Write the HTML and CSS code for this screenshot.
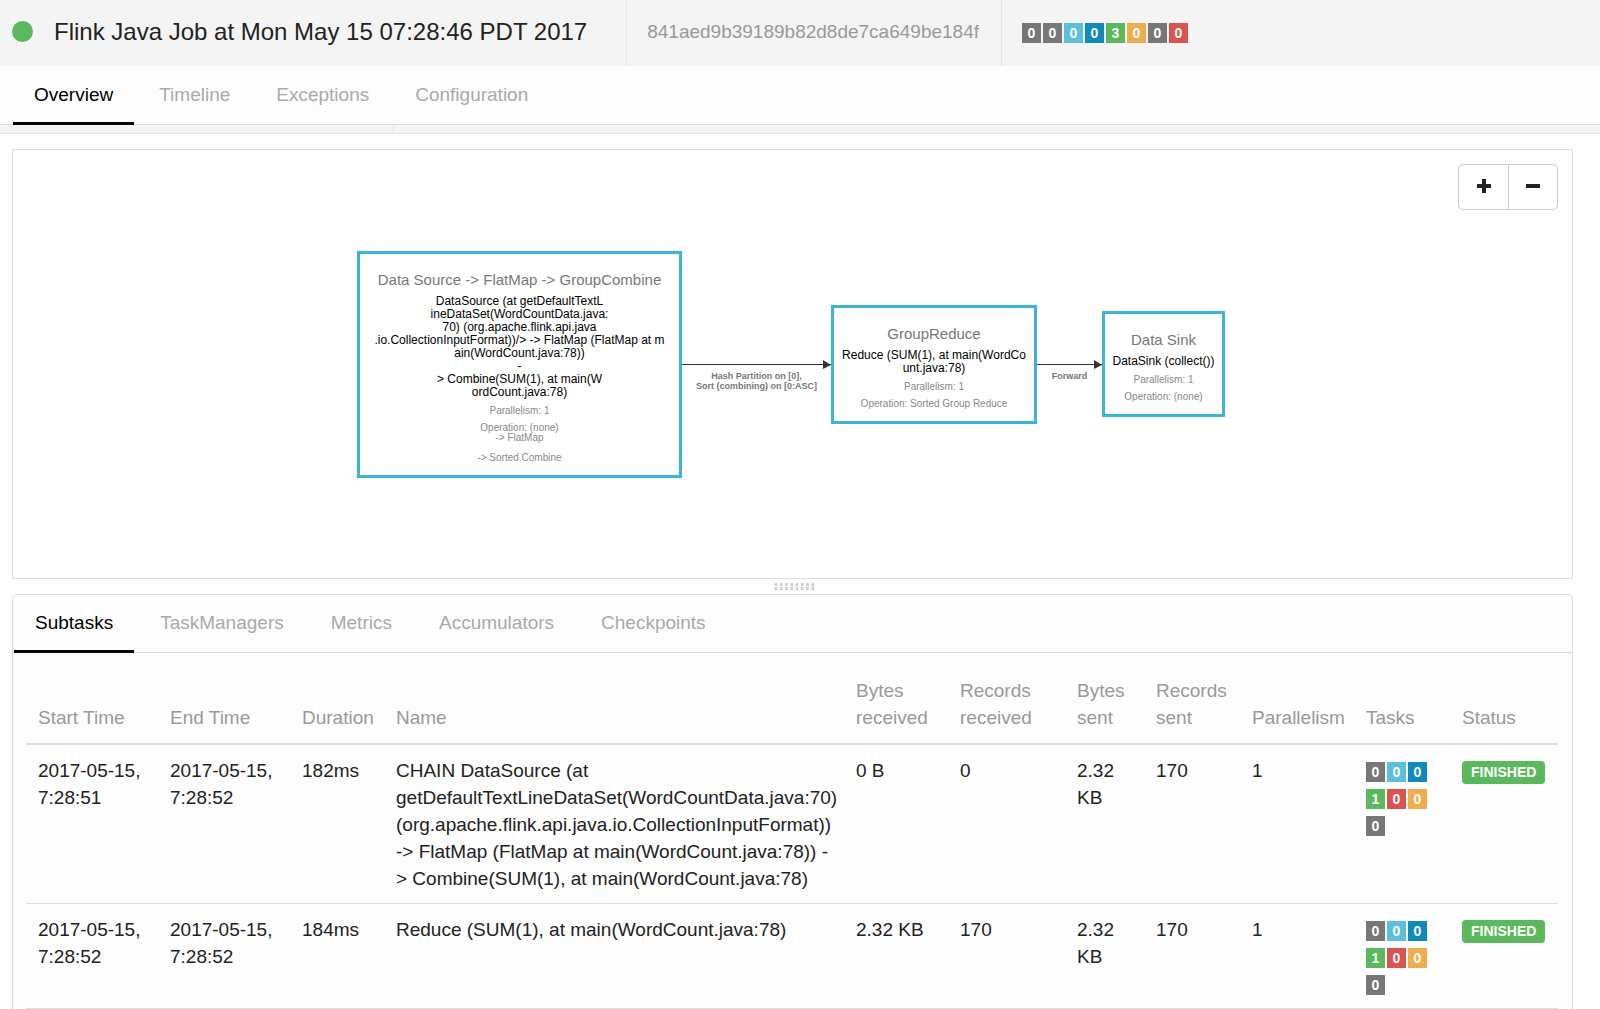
FILE: index.html
```html
<!DOCTYPE html>
<html lang="en">
<head>
    <meta charset="UTF-8">
    <meta name="viewport" content="width=device-width, initial-scale=1.0">
    <title>Apache Flink Web Dashboard</title>
    <link rel="stylesheet" href="styles.css">
</head>
<body>
    <header class="job-header">
        <div class="job-name"><span class="status-dot"></span><h1>Flink Java Job at Mon May 15 07:28:46 PDT 2017</h1></div>
        <div class="job-id">841aed9b39189b82d8de7ca649be184f</div>
        <div class="job-counts">
            <span class="count gray">0</span><span class="count gray">0</span><span class="count sky">0</span><span class="count blue">0</span><span class="count green">3</span><span class="count orange">0</span><span class="count gray">0</span><span class="count red">0</span>
        </div>
    </header>
    <nav class="tabs main-tabs">
        <a href="#overview" class="active">Overview</a>
        <a href="#timeline">Timeline</a>
        <a href="#exceptions">Exceptions</a>
        <a href="#configuration">Configuration</a>
    </nav>
    <div class="header-strip"><span></span></div>

    <main>
        <section class="plan">
            <div class="zoom-buttons">
                <button type="button" aria-label="Zoom in"><svg width="16" height="16" viewBox="0 0 16 16"><path d="M6 1h4v5h5v4h-5v5H6v-5H1V6h5z"/></svg></button>
                <button type="button" aria-label="Zoom out"><svg width="16" height="16" viewBox="0 0 16 16"><path d="M1 6h14v4H1z"/></svg></button>
            </div>
            <div class="graph">
                <div class="node source">
                    <h4>Data Source -&gt; FlatMap -&gt; GroupCombine</h4>
                    <p class="node-name">DataSource (at getDefaultTextL<br>ineDataSet(WordCountData.java:<br>70) (org.apache.flink.api.java<br>.io.CollectionInputFormat))/&gt; -&gt; FlatMap (FlatMap at m<br>ain(WordCount.java:78))<br>-<br>&gt; Combine(SUM(1), at main(W<br>ordCount.java:78)</p>
                    <p class="node-info">Parallelism: 1</p>
                    <p class="node-info">Operation: (none)<br>-&gt; FlatMap<br><br>-&gt; Sorted Combine</p>
                </div>
                <div class="edge edge-long">
                    <div class="arrow"></div>
                    <p>Hash Partition on [0],<br>Sort (combining) on [0:ASC]</p>
                </div>
                <div class="node reduce">
                    <h4>GroupReduce</h4>
                    <p class="node-name">Reduce (SUM(1), at main(WordCo<br>unt.java:78)</p>
                    <p class="node-info">Parallelism: 1</p>
                    <p class="node-info">Operation: Sorted Group Reduce</p>
                </div>
                <div class="edge edge-short">
                    <div class="arrow"></div>
                    <p>Forward</p>
                </div>
                <div class="node sink">
                    <h4>Data Sink</h4>
                    <p class="node-name">DataSink (collect())</p>
                    <p class="node-info">Parallelism: 1</p>
                    <p class="node-info">Operation: (none)</p>
                </div>
            </div>
        </section>

        <div class="splitter"><span></span></div>

        <section class="details">
            <nav class="tabs">
                <a href="#subtasks" class="active">Subtasks</a>
                <a href="#taskmanagers">TaskManagers</a>
                <a href="#metrics">Metrics</a>
                <a href="#accumulators">Accumulators</a>
                <a href="#checkpoints">Checkpoints</a>
            </nav>
            <table>
                <colgroup>
                    <col class="col-time"><col class="col-time"><col class="col-duration"><col>
                    <col class="col-bytes-in"><col class="col-records-in"><col class="col-bytes-out"><col class="col-records-out">
                    <col class="col-parallelism"><col class="col-tasks"><col class="col-status">
                </colgroup>
                <thead>
                    <tr>
                        <th>Start Time</th>
                        <th>End Time</th>
                        <th>Duration</th>
                        <th>Name</th>
                        <th>Bytes received</th>
                        <th>Records received</th>
                        <th>Bytes sent</th>
                        <th>Records sent</th>
                        <th>Parallelism</th>
                        <th>Tasks</th>
                        <th>Status</th>
                    </tr>
                </thead>
                <tbody>
                    <tr>
                        <td>2017-05-15, 7:28:51</td>
                        <td>2017-05-15, 7:28:52</td>
                        <td>182ms</td>
                        <td>CHAIN DataSource (at<br>getDefaultTextLineDataSet(WordCountData.java:70)<br>(org.apache.flink.api.java.io.CollectionInputFormat))<br>-&gt; FlatMap (FlatMap at main(WordCount.java:78)) -<br>&gt; Combine(SUM(1), at main(WordCount.java:78)</td>
                        <td>0 B</td>
                        <td>0</td>
                        <td>2.32 KB</td>
                        <td>170</td>
                        <td>1</td>
                        <td><div class="task-counts"><span class="count gray">0</span><span class="count sky">0</span><span class="count blue">0</span><span class="count green">1</span><span class="count red">0</span><span class="count orange">0</span><span class="count gray">0</span></div></td>
                        <td><span class="label">FINISHED</span></td>
                    </tr>
                    <tr>
                        <td>2017-05-15, 7:28:52</td>
                        <td>2017-05-15, 7:28:52</td>
                        <td>184ms</td>
                        <td>Reduce (SUM(1), at main(WordCount.java:78)</td>
                        <td>2.32 KB</td>
                        <td>170</td>
                        <td>2.32 KB</td>
                        <td>170</td>
                        <td>1</td>
                        <td><div class="task-counts"><span class="count gray">0</span><span class="count sky">0</span><span class="count blue">0</span><span class="count green">1</span><span class="count red">0</span><span class="count orange">0</span><span class="count gray">0</span></div></td>
                        <td><span class="label">FINISHED</span></td>
                    </tr>
                </tbody>
            </table>
        </section>
    </main>
</body>
</html>
```
FILE: styles.css
```css
* { box-sizing: border-box; }
body { margin: 0; background: #fff; color: #222; font-family: "Liberation Sans", Arial, sans-serif; font-size: 19px; line-height: 27px; }
h1, h4, p { margin: 0; font-weight: normal; }

.job-header { display: flex; height: 66px; background: #f4f4f4; }
.job-header > div { display: flex; align-items: center; padding: 0 22px 4px 20px; border-right: 1px solid #e4e4e4; }
.job-header > .job-name { gap: 21px; padding-left: 12px; padding-right: 39px; }
.job-header > .job-counts { border-right: 0; gap: 2px; padding-bottom: 0; }
.status-dot { width: 21px; height: 21px; border-radius: 50%; background: #5cb85c; }
h1 { font-size: 24px; }
.job-id { color: #999; }

.count { width: 19px; height: 20px; line-height: 20px; text-align: center; color: #fff; font-size: 14px; font-weight: bold; }
.gray { background: #777; }
.sky { background: #5bc0de; }
.blue { background: #1189ba; }
.green { background: #5cb85c; }
.orange { background: #f0ad4e; }
.red { background: #d9534f; }

.tabs { display: flex; gap: 4px; background: #fdfdfd; border-bottom: 1px solid #ddd; }
.tabs a { padding: 15px 21px 14px; margin-bottom: -1px; border-bottom: 3px solid transparent; color: #aaa; text-decoration: none; }
.tabs a.active { color: #000; border-color: #000; }
.main-tabs { padding-left: 13px; }
.header-strip { height: 9px; background: #f4f4f4; border-bottom: 1px solid #e4e4e4; }
.header-strip span { display: block; width: 394px; height: 8px; border-right: 1px solid #e4e4e4; }

main { padding: 15px 27px 0 12px; }
.plan { position: relative; display: flex; align-items: center; justify-content: center; height: 430px; padding-right: 3px; border: 1px solid #ddd; }
.zoom-buttons { position: absolute; top: 14px; right: 14px; display: flex; border: 1px solid #ccc; border-radius: 5px; }
.zoom-buttons button { width: 49px; height: 44px; padding: 0; border: 0; background: none; cursor: pointer; }
.zoom-buttons button + button { border-left: 1px solid #ccc; }
.zoom-buttons svg { fill: #222; }

.graph { display: flex; align-items: center; }
.node { border: 3px solid #3bb4d8; background: #fff; text-align: center; white-space: nowrap; padding: 16px 0 5px; }
.source { width: 325px; }
.reduce { width: 206px; }
.sink { width: 123px; }
.node h4 { color: #777; font-size: 15px; line-height: 20px; }
.node-name { color: #000; font-size: 12px; line-height: 13px; margin: 5px 0 7px; }
.node-info { color: #888; font-size: 10px; line-height: 10px; margin-bottom: 7px; }
.edge { position: relative; }
.edge-long { width: 149px; }
.edge-short { width: 65px; }
.arrow { height: 1px; background: #333; position: relative; }
.arrow::after { content: ""; position: absolute; right: 0; top: -4px; border-left: 8px solid #333; border-top: 5px solid transparent; border-bottom: 4px solid transparent; }
.edge p { position: absolute; top: 7px; left: 0; right: 0; color: #777; font-size: 9px; font-weight: bold; line-height: 10px; text-align: center; white-space: nowrap; }

.splitter { display: flex; justify-content: center; align-items: center; height: 15px; }
.splitter span { width: 42px; height: 8px; background: conic-gradient(from 90deg at 3px 3px, transparent 270deg, #ccc 0) 0 0 / 5px 4px round; }

.details { border: 1px solid #ddd; border-bottom: 0; border-radius: 5px 5px 0 0; background: #fdfdfd; }
.details .tabs { background: none; gap: 5px; padding-left: 1px; }
.details .tabs a { padding-top: 14px; }
table { width: calc(100% - 27px); margin: 12px 14px 0 13px; border-collapse: separate; border-spacing: 0; table-layout: fixed; border-bottom: 2px solid #ddd; }
th { color: #999; font-weight: normal; text-align: left; vertical-align: bottom; padding: 12px; border-bottom: 2px solid #ddd; }
td { vertical-align: top; padding: 12px 8px 11px 12px; }
tr + tr td { border-top: 1px solid #ddd; }
.col-time { width: 132px; }
.col-duration { width: 94px; }
.col-bytes-in { width: 104px; }
.col-records-in { width: 117px; }
.col-bytes-out { width: 79px; }
.col-records-out { width: 96px; }
.col-parallelism { width: 114px; }
.col-tasks { width: 96px; }
.col-status { width: 108px; }
.task-counts { display: flex; flex-wrap: wrap; gap: 7px 2px; padding: 5px 0 2px; }
.label { display: inline-block; padding: 0 9px; border-radius: 4px; background: #5cb85c; color: #fff; font-size: 14px; font-weight: bold; line-height: 23px; }
```
